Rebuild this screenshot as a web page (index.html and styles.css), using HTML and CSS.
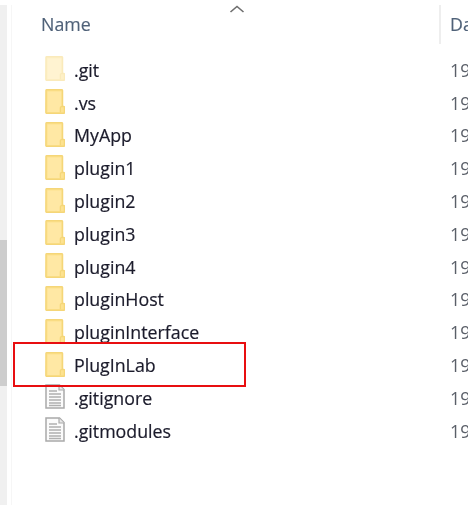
FILE: index.html
```html
<!DOCTYPE html>
<html lang="en">
<head>
  <meta charset="UTF-8">
  <title>Explorer file list</title>
  <link rel="stylesheet" href="styles.css">
</head>
<body>
  <svg class="defs" width="0" height="0">
    <symbol id="folder" viewBox="0 0 20 25">
      <path d="M1 1.5C1 1 1.4.7 2 .7h14.6c.5 0 .9.4.9.9v15.9h1.2c.5 0 .8.3.8.8v5.2c0 .5-.3.8-.8.8H1.6c-.4 0-.7-.3-.7-.8z" fill="#fde28f" stroke="#f5d678" stroke-width="1.5"/>
      <path d="M2.6 2.4h13.6v14.4l-1.6 1.2v5H2.6z" fill="#ffe8a4"/>
      <path d="M17.2 17.2c-1.1.2-1.8.8-1.8 1.8v4.2" fill="none" stroke="#f5d678" stroke-width="1.1"/>
    </symbol>
    <symbol id="file" viewBox="0 0 20 25">
      <path d="M1 1h13.5L19 5.5V24H1z" fill="#fbfbfb" stroke="#a9a9a9" stroke-width="1.5"/>
      <path d="M14 1v5h5" fill="#e8e8e8" stroke="#a9a9a9" stroke-width="1.2"/>
      <path d="M4 7h8M4 10h12M4 13h12M4 16h12M4 19h12M4 21.5h12" stroke="#b0b0b0" stroke-width="1.3"/>
    </symbol>
  </svg>

  <div class="window">
    <div class="sidebar">
      <div class="scrollbar"><div class="thumb"></div></div>
      <div class="edge"></div>
    </div>

    <div class="content">
      <div class="header">
        <div class="col-name">Name</div>
        <svg class="sort" width="16" height="8" viewBox="0 0 16 8"><path d="M1.5 7L8 1.5 14.5 7" fill="none" stroke="#6e6e6e" stroke-width="1.6"/></svg>
        <div class="divider"></div>
        <div class="col-date">Da</div>
      </div>

      <div class="rows">
        <div class="row faded"><svg class="icon"><use href="#folder"/></svg><span class="name">.git</span><span class="date">19</span></div>
        <div class="row"><svg class="icon"><use href="#folder"/></svg><span class="name">.vs</span><span class="date">19</span></div>
        <div class="row"><svg class="icon"><use href="#folder"/></svg><span class="name">MyApp</span><span class="date">19</span></div>
        <div class="row"><svg class="icon"><use href="#folder"/></svg><span class="name">plugin1</span><span class="date">19</span></div>
        <div class="row"><svg class="icon"><use href="#folder"/></svg><span class="name">plugin2</span><span class="date">19</span></div>
        <div class="row"><svg class="icon"><use href="#folder"/></svg><span class="name">plugin3</span><span class="date">19</span></div>
        <div class="row"><svg class="icon"><use href="#folder"/></svg><span class="name">plugin4</span><span class="date">19</span></div>
        <div class="row"><svg class="icon"><use href="#folder"/></svg><span class="name">pluginHost</span><span class="date">19</span></div>
        <div class="row"><svg class="icon"><use href="#folder"/></svg><span class="name">pluginInterface</span><span class="date">19</span></div>
        <div class="row"><svg class="icon"><use href="#folder"/></svg><span class="name">PlugInLab</span><span class="date">19</span></div>
        <div class="row"><svg class="icon"><use href="#file"/></svg><span class="name">.gitignore</span><span class="date">19</span></div>
        <div class="row"><svg class="icon"><use href="#file"/></svg><span class="name">.gitmodules</span><span class="date">19</span></div>
      </div>
    </div>

    <!-- annotation over the list -->
    <div class="highlight"></div>
  </div>
</body>
</html>
```

FILE: styles.css
```css
* { margin:0; padding:0; box-sizing:border-box; }
body { font-family:"Open Sans", "Noto Sans", sans-serif; background:#fff; color:#1b1b2b; height:505px; overflow:hidden; }
.defs { position:absolute; }

.window { position:relative; display:flex; height:505px; overflow:hidden; }

/* left nav pane, only its scrollbar is visible */
.sidebar { display:flex; width:13px; flex:none; padding-top:5px; }
.scrollbar { width:7px; background:#f0f0f0; padding-top:235px; }
.thumb { height:146px; background:#cdcdcd; }
.edge { width:1px; margin-left:4px; background:#f6f6f6; }

/* the screenshot was scaled up, so everything in it is a little soft */
.content { flex:none; width:455px; filter:blur(0.35px); }

.header { display:flex; height:54px; color:#4f6178; font-size:17.8px; -webkit-text-stroke:0.15px #4f6178; }
.col-name { flex:none; width:188px; margin-left:28px; padding-top:12px; }
.sort { flex:none; margin-top:5px; }
.divider { flex:none; width:2px; height:39px; margin:5px 0 0 194px; background:#eeeeee; }
.col-date { flex:none; margin-left:9px; padding-top:12px; }

.rows { display:flex; flex-direction:column; }
.row { display:flex; align-items:center; height:32.8px; font-size:17.8px; line-height:31px; -webkit-text-stroke:0.2px #1b1b2b; }
.icon { width:20px; height:25px; margin:0 0 3px 32px; flex:none; }
.name { flex:none; width:376px; margin-left:9px; white-space:nowrap; }
.date { color:#5a5f68; -webkit-text-stroke:0; }
.faded .icon { opacity:0.5; }

.highlight { position:absolute; left:13px; top:342px; width:233px; height:45px; border:2px solid #e80e10; }
```
